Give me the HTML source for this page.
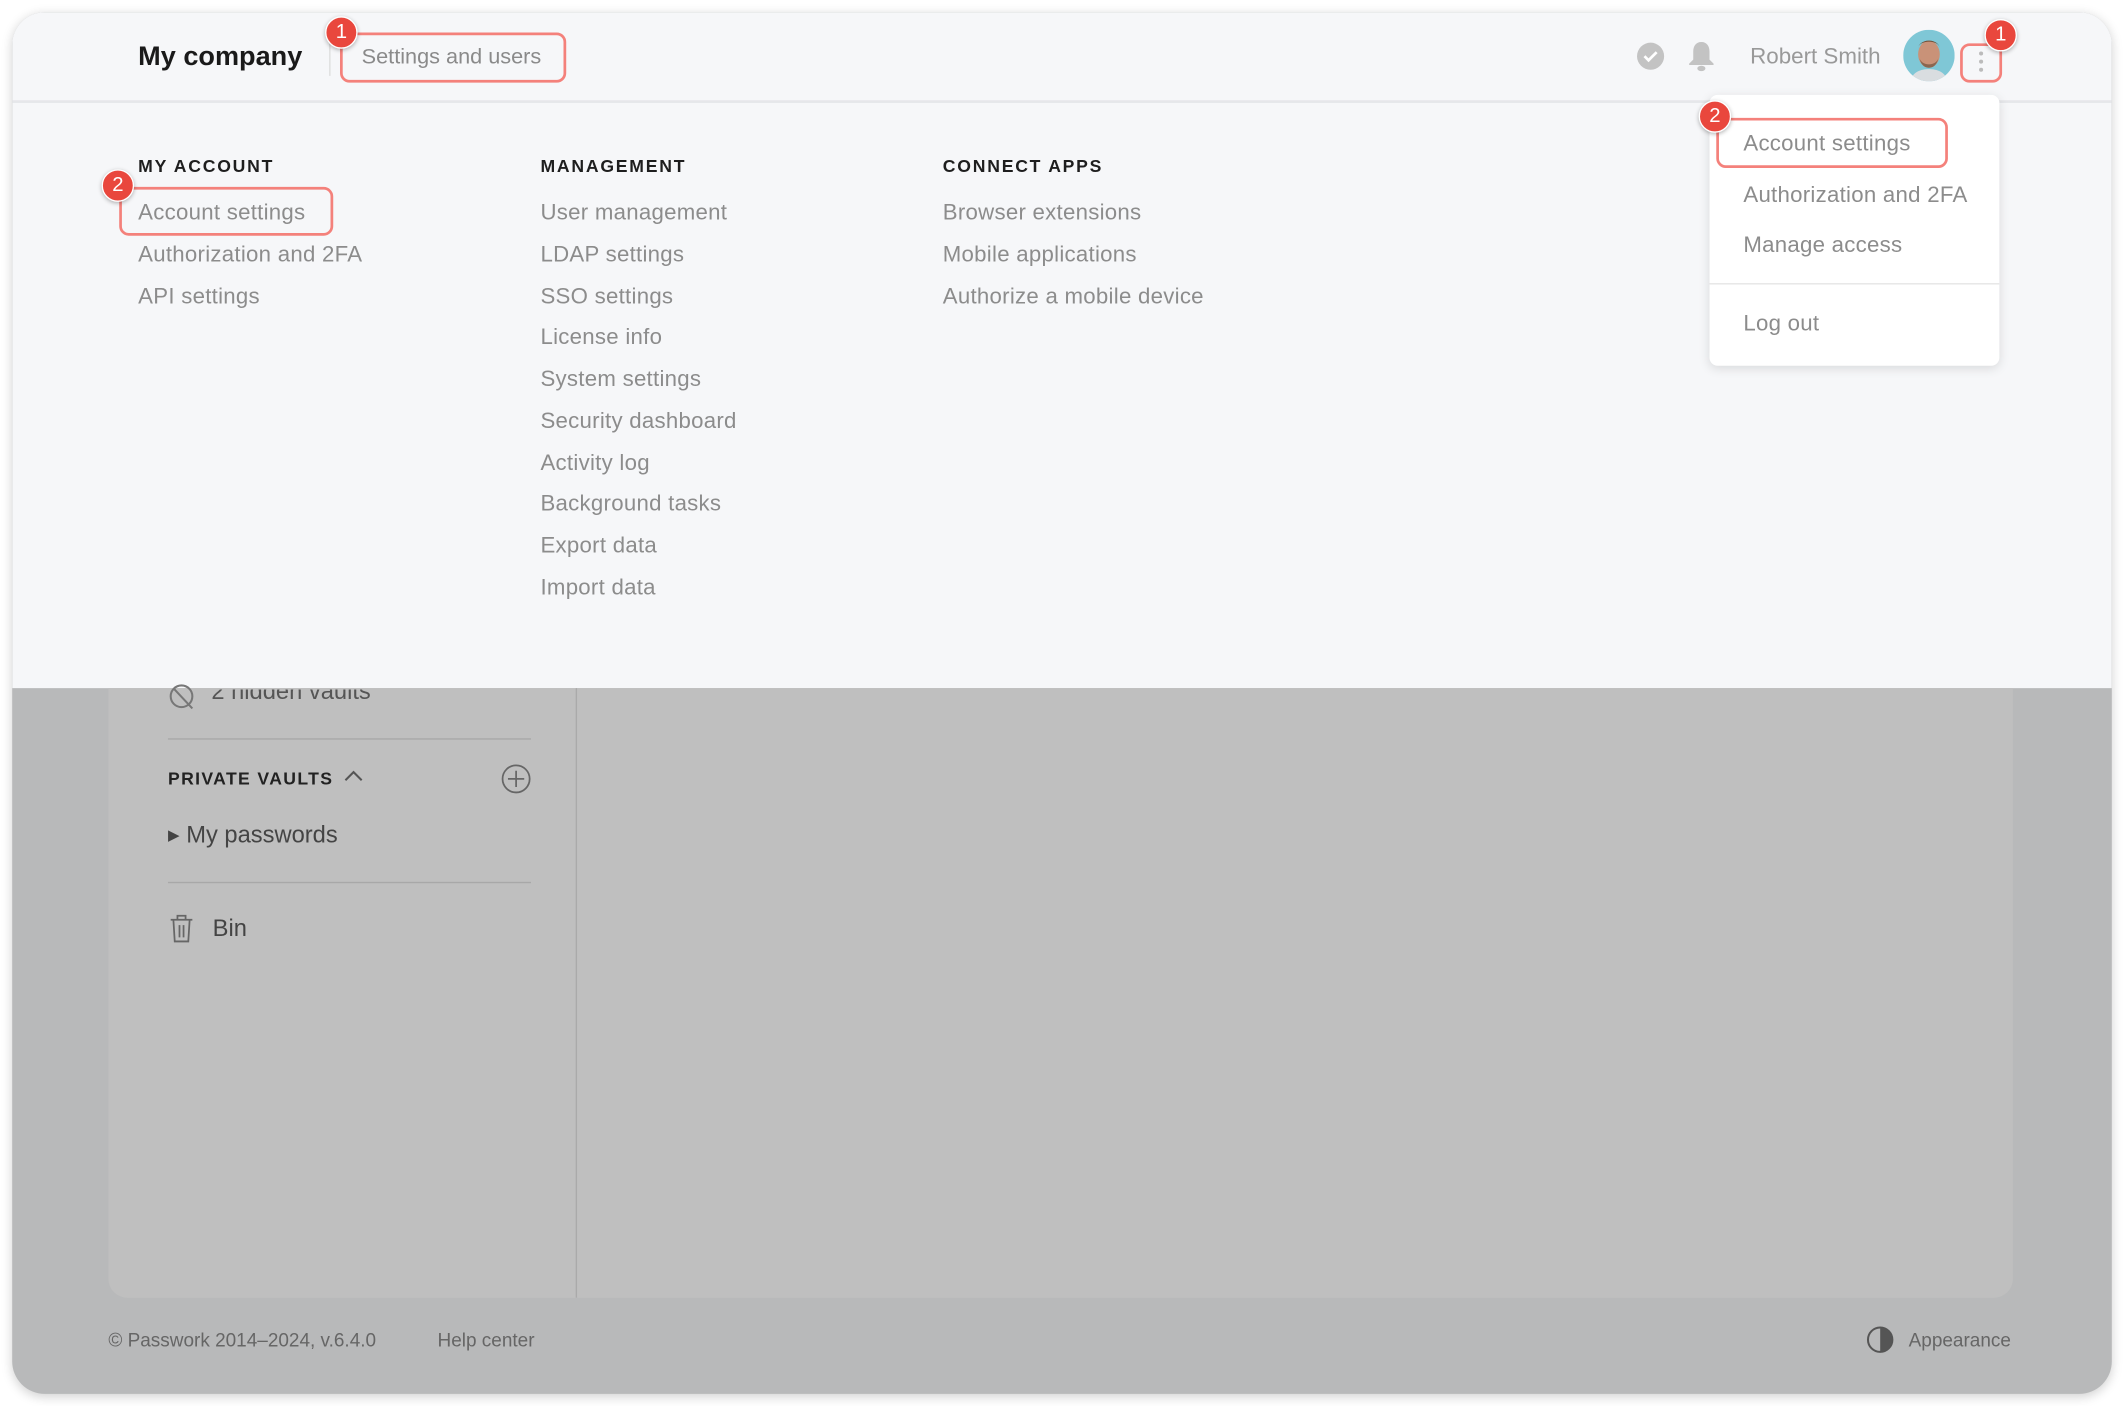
<!DOCTYPE html>
<html><head><meta charset="utf-8"><style>
html,body{margin:0;padding:0;background:#fff;width:2124px;height:1406px;overflow:hidden}
#s{position:absolute;left:0;top:0;width:1568px;height:1038px;transform:scale(1.354592);transform-origin:0 0;font-family:"Liberation Sans",sans-serif}
.a{position:absolute}
.card{left:9px;top:9px;width:1550px;height:1020px;border-radius:24px;background:#b8b9ba;overflow:hidden;box-shadow:0 2px 8px rgba(0,0,0,.18)}
.top{left:0;top:0;width:1550px;height:499px;background:#f6f7f9}
.hl{left:0;top:65px;width:1550px;height:2px;background:#e6e7ea}
.t{white-space:nowrap;line-height:1}
.item{font-size:16.4px;letter-spacing:.2px;color:#8c8c8c;margin-top:1px}
.h{font-size:13px;font-weight:bold;letter-spacing:1.3px;color:#1e1e1e}
.box{border:2px solid #f4817b;border-radius:7px;box-sizing:border-box}
.badge{width:22px;height:22px;border-radius:50%;background:#e9473d;color:#fff;font-size:15px;text-align:center;line-height:22px;border:1.5px solid #fff;box-shadow:0 1px 3px rgba(0,0,0,.3)}
</style></head><body><div id="s">
<div class="a card">
  <div class="a top"></div>
  <div class="a hl"></div>
  <div class="a" style="left:71px;top:499px;width:1406px;height:450px;background:#bfbfbf;border-radius:0 0 14px 14px"></div>
  <div class="a" style="left:416px;top:499px;width:1px;height:450px;background:#aaa"></div>
  <div class="a t" style="left:147px;top:493px;font-size:17.5px;color:#555;clip-path:inset(7px 0 0 0)">2 hidden vaults</div>
  <svg class="a" style="left:114px;top:494px" width="24" height="24" viewBox="0 0 24 24"><circle cx="11" cy="11" r="8" fill="none" stroke="#777" stroke-width="1.5"/><path d="M5 5 L19 20" stroke="#777" stroke-width="1.5"/></svg>
  <div class="a" style="left:115px;top:536px;width:268px;height:1px;background:#a8a8a8"></div>
  <div class="a t h" style="left:115px;top:559px;color:#222;letter-spacing:1px">PRIVATE VAULTS</div>
  <svg class="a" style="left:245px;top:559px" width="14" height="10" viewBox="0 0 14 10"><path d="M1 8 L7 2 L13 8" fill="none" stroke="#555" stroke-width="1.5"/></svg>
  <svg class="a" style="left:361px;top:555px" width="22" height="22" viewBox="0 0 22 22"><circle cx="11" cy="11" r="10" fill="none" stroke="#666" stroke-width="1.3"/><path d="M11 5v12M5 11h12" stroke="#666" stroke-width="1.3"/></svg>
  <div class="a t" style="left:115px;top:599px;font-size:17.5px;color:#444"><span style="font-size:11px;vertical-align:2px;margin-right:5px">▶</span>My passwords</div>
  <div class="a" style="left:115px;top:642px;width:268px;height:1px;background:#a8a8a8"></div>
  <svg class="a" style="left:116px;top:665px" width="18" height="22" viewBox="0 0 18 22"><path d="M1 5h16M6 5V2h6v3M3 5l1 16h10l1-16M7.5 9v9M10.5 9v9" fill="none" stroke="#666" stroke-width="1.3"/></svg>
  <div class="a t" style="left:148px;top:668px;font-size:17.5px;color:#444">Bin</div>
  <div class="a t" style="left:71px;top:973px;font-size:14px;color:#666">© Passwork 2014–2024, v.6.4.0</div>
  <div class="a t" style="left:314px;top:973px;font-size:14px;color:#666">Help center</div>
  <svg class="a" style="left:1369px;top:970px" width="20" height="20" viewBox="0 0 20 20"><circle cx="10" cy="10" r="9" fill="none" stroke="#555" stroke-width="1.5"/><path d="M10 1a9 9 0 0 1 0 18z" fill="#555"/></svg>
  <div class="a t" style="left:1400px;top:973px;font-size:14px;color:#666">Appearance</div>

  <div class="a t" style="left:93px;top:23px;font-size:20px;font-weight:bold;color:#1a1a1a">My company</div>
  <div class="a" style="left:234px;top:17px;width:1px;height:30px;background:#ddd"></div>
  <div class="a box" style="left:242px;top:15px;width:167px;height:37px"></div>
  <div class="a t" style="left:258px;top:26px;font-size:16px;color:#8a8a8a">Settings and users</div>
  <div class="a badge" style="left:231px;top:3px">1</div>

  <svg class="a" style="left:1199px;top:22px" width="21" height="21" viewBox="0 0 21 21"><circle cx="10.5" cy="10.5" r="10" fill="#c3c3c3"/><path d="M6 10.5l3 3 6-6" fill="none" stroke="#fff" stroke-width="2"/></svg>
  <svg class="a" style="left:1236px;top:20px" width="22" height="25" viewBox="0 0 22 25"><path d="M11 2c-4 0-6 3-6 7v6l-3 3v1h18v-1l-3-3V9c0-4-2-7-6-7z" fill="#c3c3c3"/><ellipse cx="11" cy="21.5" rx="3" ry="2" fill="#c3c3c3"/></svg>
  <div class="a t" style="left:1283px;top:25px;font-size:16.5px;color:#999">Robert Smith</div>
  <svg class="a" style="left:1396px;top:13px" width="38" height="38" viewBox="0 0 38 38"><defs><clipPath id="c"><circle cx="19" cy="19" r="19"/></clipPath></defs><g clip-path="url(#c)"><rect width="38" height="38" fill="#7fc7d6"/><path d="M5 38c2-7 8-9 14-9s12 2 14 9z" fill="#d9dde0"/><ellipse cx="19" cy="18" rx="8" ry="10" fill="#c99278"/><path d="M11 14c0-7 16-7 16 0 0-3-3-6-8-6s-8 3-8 6z" fill="#6b4a32"/><path d="M12 21c2 6 12 6 14 0-1 4-3 7-7 7s-6-3-7-7z" fill="#8a6650"/></g></svg>
  <div class="a box" style="left:1438px;top:23px;width:31px;height:29px"></div>
  <div class="a" style="left:1452px;top:29px;width:3px;height:3px;border-radius:50%;background:#bbb;box-shadow:0 6px 0 #bbb,0 12px 0 #bbb"></div>
  <div class="a badge" style="left:1456px;top:5px">1</div>

  <div class="a t h" style="left:93px;top:107px">MY ACCOUNT</div>
  <div class="a t item" style="left:93px;top:139px">Account settings</div>
  <div class="a t item" style="left:93px;top:170px">Authorization and 2FA</div>
  <div class="a t item" style="left:93px;top:201px">API settings</div>
  <div class="a box" style="left:79px;top:129px;width:158px;height:36px"></div>
  <div class="a badge" style="left:66px;top:116px">2</div>

  <div class="a t h" style="left:390px;top:107px">MANAGEMENT</div>
  <div class="a t item" style="left:390px;top:139px">User management</div>
  <div class="a t item" style="left:390px;top:170px">LDAP settings</div>
  <div class="a t item" style="left:390px;top:201px">SSO settings</div>
  <div class="a t item" style="left:390px;top:231px">License info</div>
  <div class="a t item" style="left:390px;top:262px">System settings</div>
  <div class="a t item" style="left:390px;top:293px">Security dashboard</div>
  <div class="a t item" style="left:390px;top:324px">Activity log</div>
  <div class="a t item" style="left:390px;top:354px">Background tasks</div>
  <div class="a t item" style="left:390px;top:385px">Export data</div>
  <div class="a t item" style="left:390px;top:416px">Import data</div>

  <div class="a t h" style="left:687px;top:107px">CONNECT APPS</div>
  <div class="a t item" style="left:687px;top:139px">Browser extensions</div>
  <div class="a t item" style="left:687px;top:170px">Mobile applications</div>
  <div class="a t item" style="left:687px;top:201px">Authorize a mobile device</div>

  <div class="a" style="left:1253px;top:61px;width:214px;height:200px;background:#fff;border-radius:6px;box-shadow:0 2px 8px rgba(0,0,0,.12)">
    <div class="a" style="left:0;top:139px;width:214px;height:1px;background:#e5e5e5"></div>
  </div>
  <div class="a t item" style="left:1278px;top:88px">Account settings</div>
  <div class="a t item" style="left:1278px;top:126px">Authorization and 2FA</div>
  <div class="a t item" style="left:1278px;top:163px">Manage access</div>
  <div class="a t item" style="left:1278px;top:221px">Log out</div>
  <div class="a box" style="left:1258px;top:78px;width:171px;height:37px"></div>
  <div class="a badge" style="left:1245px;top:65px">2</div>
</div>
</div></body></html>
